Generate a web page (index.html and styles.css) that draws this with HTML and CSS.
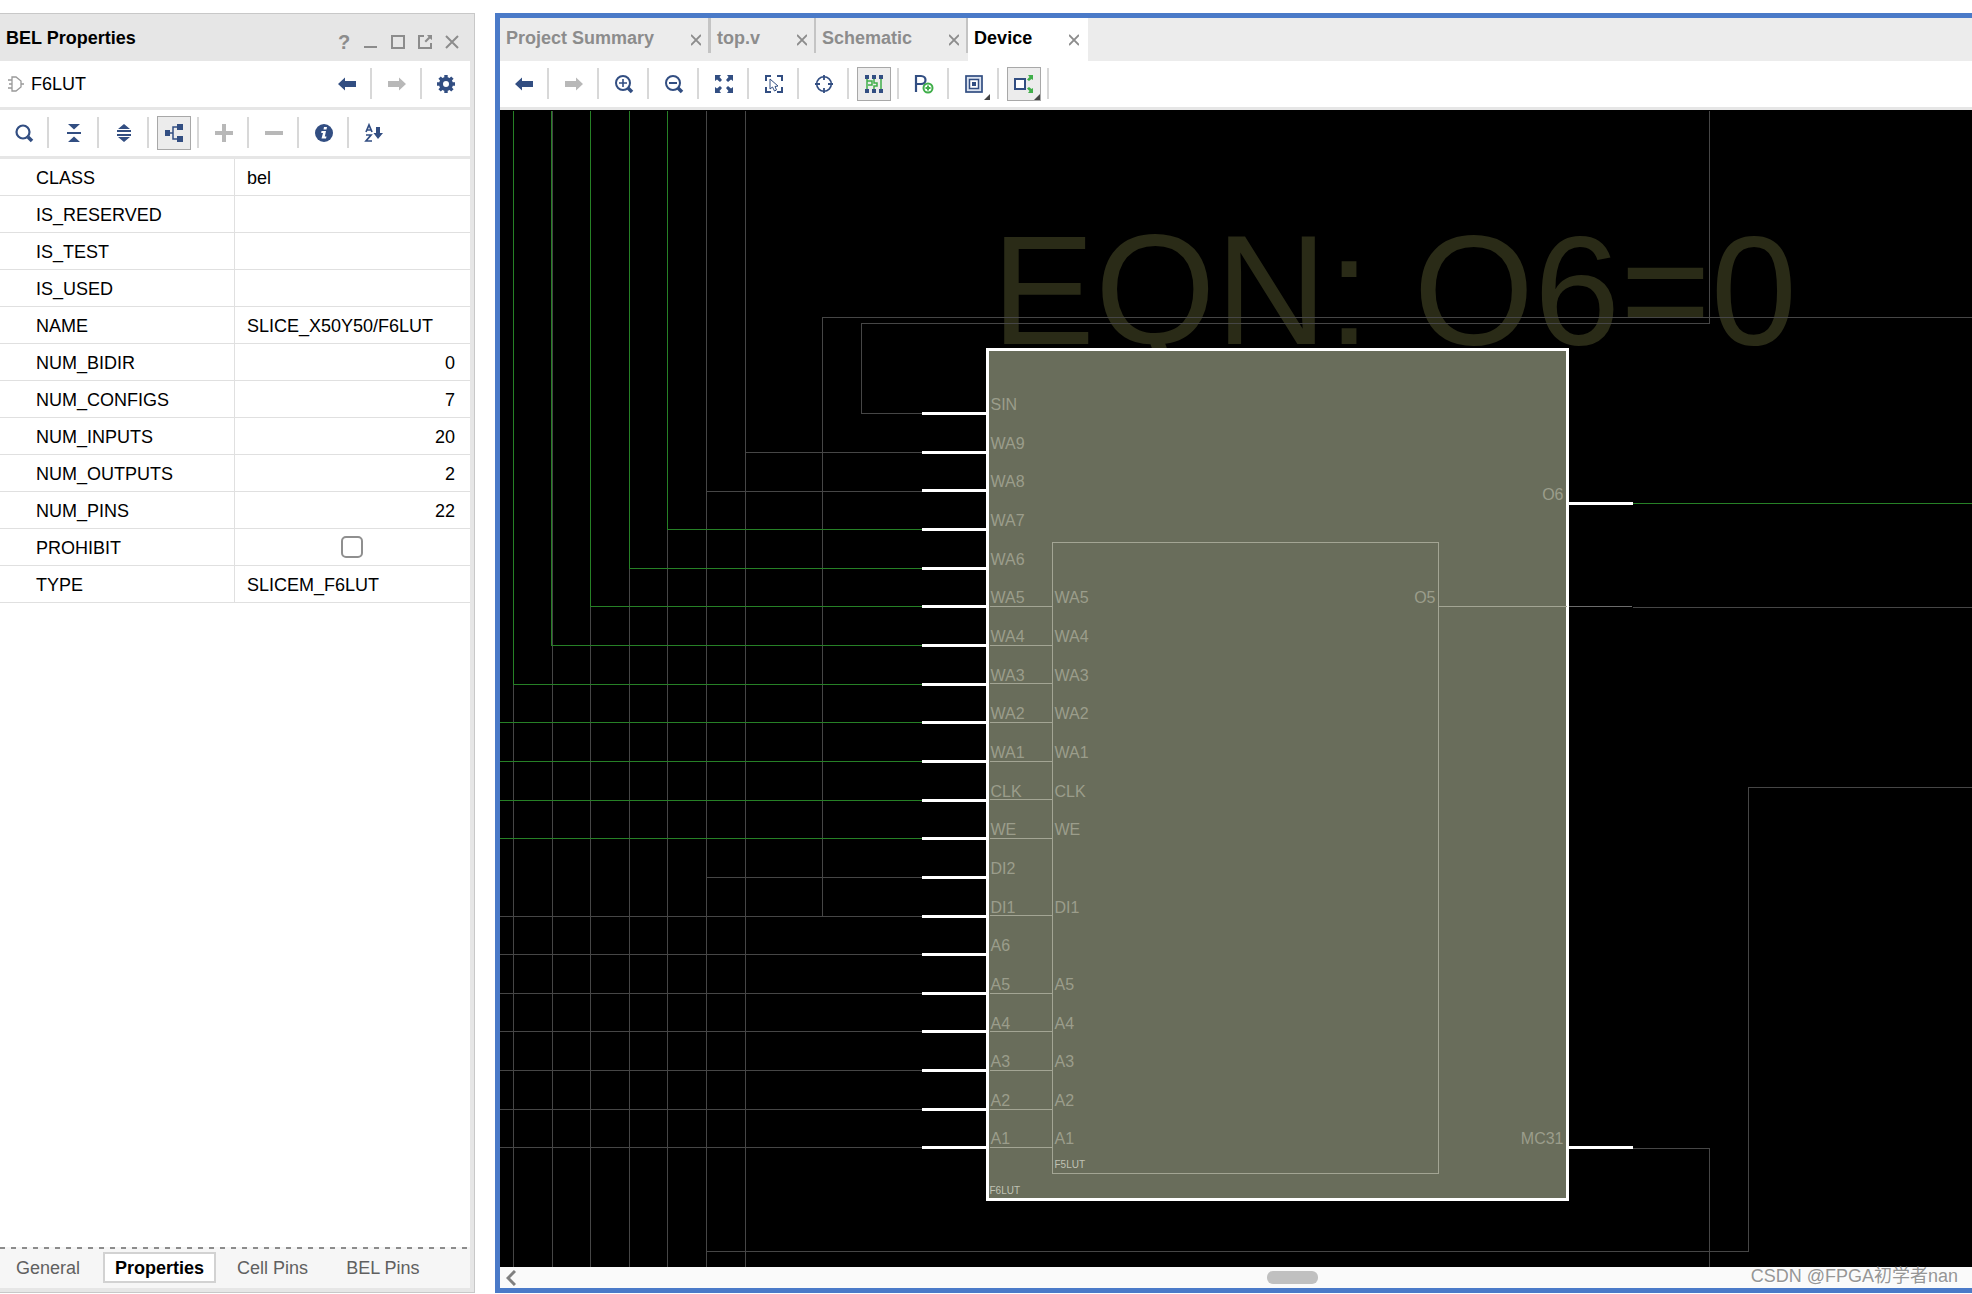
FILE: index.html
```html
<!DOCTYPE html>
<html lang="en">
<head>
<meta charset="utf-8">
<meta name="viewport" content="width=device-width, initial-scale=1">
<title>Device - F6LUT</title>
<link rel="stylesheet" href="styles.css">
</head>
<body>
<main class="workspace">
  <section class="panel" aria-label="BEL Properties">
    <header class="panel-head">
      <h2 class="panel-title">BEL Properties</h2>
      <div class="window-tools">
        <button class="win-btn help" aria-label="Help">?</button>
        <button class="win-btn" aria-label="Minimize"><svg width="14" height="14"><path d="M0 12H13" stroke="#8c8c8c" stroke-width="2"/></svg></button>
        <button class="win-btn" aria-label="Maximize"><svg width="14" height="14"><rect x="1" y="1" width="12" height="12" fill="none" stroke="#8c8c8c" stroke-width="2"/></svg></button>
        <button class="win-btn" aria-label="Float"><svg width="14" height="14"><path d="M6 1H1V13H13V8" fill="none" stroke="#8c8c8c" stroke-width="2"/><path d="M9 0H14V5L12 3.500L8 7.500L6.500 6L10.500 2Z" fill="#8c8c8c"/></svg></button>
        <button class="win-btn" aria-label="Close"><svg width="14" height="14"><path d="M1 1L13 13M13 1L1 13" stroke="#8c8c8c" stroke-width="2"/></svg></button>
      </div>
    </header>
    <div class="object-row">
      <svg class="gate" width="16" height="16"><path d="M4 1H8L13 5V11L8 15H4Z" fill="none" stroke="#999" stroke-width="1.3"/><path d="M0 4H4M1 8H4M0 12H4M13 8H16" stroke="#999" stroke-width="1.3"/></svg>
      <span class="object-name">F6LUT</span>
      <div class="tools">
        <button class="tool" aria-label="Back"><svg width="18" height="18"><path d="M0 9L7 2.500V6H18V12H7V15.500Z" fill="#324e82"/></svg></button>
        <button class="tool" aria-label="Forward"><svg width="18" height="18"><path d="M18 9L11 2.500V6H0V12H11V15.500Z" fill="#b8b8b8"/></svg></button>
        <button class="tool last" aria-label="Settings"><svg width="18" height="18"><circle cx="9" cy="9" r="5" fill="none" stroke="#324e82" stroke-width="4"/><path d="M9 0V4M9 14V18M0 9H4M14 9H18M2.600 2.600L5 5M13 13L15.400 15.400M15.400 2.600L13 5M5 13L2.600 15.400" stroke="#324e82" stroke-width="3.400"/></svg></button>
      </div>
    </div>
    <div class="toolbar">
      <button class="tool" aria-label="Search"><svg width="18" height="18"><circle cx="8" cy="8" r="6.500" fill="none" stroke="#324e82" stroke-width="2.200"/><path d="M13 13L17 17" stroke="#324e82" stroke-width="3.500"/></svg></button>
      <button class="tool" aria-label="Collapse All"><svg width="18" height="18"><path d="M3 0H15L9 5.500ZM3 18H15L9 12.500ZM2 8H16V10H2Z" fill="#324e82"/></svg></button>
      <button class="tool" aria-label="Expand All"><svg width="18" height="18"><path d="M9 0L15 5H3ZM9 18L15 13H3ZM2 6H16V8H2ZM2 10H16V12H2Z" fill="#324e82"/></svg></button>
      <button class="tool on" aria-label="Group by Type"><svg width="18" height="18"><path d="M0 6H5V12H0ZM12 0H18V6H12ZM12 12H18V18H12Z" fill="#324e82"/><path d="M5 9H8M13 3H8V15H13" fill="none" stroke="#324e82" stroke-width="1.500"/></svg></button>
      <button class="tool" aria-label="Add"><svg width="18" height="18"><path d="M0 9H18M9 0V18" stroke="#b8b8b8" stroke-width="4"/></svg></button>
      <button class="tool" aria-label="Remove"><svg width="18" height="18"><path d="M0 9H18" stroke="#b8b8b8" stroke-width="4"/></svg></button>
      <button class="tool" aria-label="Info"><svg width="18" height="18"><circle cx="9" cy="9" r="9" fill="#324e82"/><path d="M9 3H12L11.500 5.500H8.500ZM6.500 7H11L9.800 12.500H11.500L11 14.500H6.500L8 9H6.200Z" fill="#fff"/></svg></button>
      <button class="tool last" aria-label="Sort"><svg width="18" height="18"><path d="M1 8L4 1L7 8M2 6H6M1 11H6L1 17H7" fill="none" stroke="#324e82" stroke-width="1.700"/><path d="M11 3H15V9H18L13 15L8.500 9H11Z" fill="#324e82"/></svg></button>
    </div>
    <div class="props">
      <table class="prop-table">
        <tbody>
          <tr><th scope="row">CLASS</th><td>bel</td></tr>
          <tr><th scope="row">IS_RESERVED</th><td></td></tr>
          <tr><th scope="row">IS_TEST</th><td></td></tr>
          <tr><th scope="row">IS_USED</th><td></td></tr>
          <tr><th scope="row">NAME</th><td>SLICE_X50Y50/F6LUT</td></tr>
          <tr><th scope="row">NUM_BIDIR</th><td class="num">0</td></tr>
          <tr><th scope="row">NUM_CONFIGS</th><td class="num">7</td></tr>
          <tr><th scope="row">NUM_INPUTS</th><td class="num">20</td></tr>
          <tr><th scope="row">NUM_OUTPUTS</th><td class="num">2</td></tr>
          <tr><th scope="row">NUM_PINS</th><td class="num">22</td></tr>
          <tr><th scope="row"><label for="prohibit">PROHIBIT</label></th><td class="check"><input type="checkbox" id="prohibit"></td></tr>
          <tr><th scope="row">TYPE</th><td>SLICEM_F6LUT</td></tr>
        </tbody>
      </table>
    </div>
    <nav class="bottom-tabs">
      <button class="btab">General</button>
      <button class="btab current">Properties</button>
      <button class="btab">Cell Pins</button>
      <button class="btab">BEL Pins</button>
    </nav>
  </section>

  <section class="editor" aria-label="Device">
    <div class="tabs">
      <div class="tab wide-edge"><button class="tab-name">Project Summary</button><button class="tab-close" aria-label="Close Project Summary"><svg width="10" height="12"><path d="M0 1L10 11M10 1L0 11" stroke="#8c8c8c" stroke-width="1.800"/></svg></button></div>
      <div class="tab"><button class="tab-name">top.v</button><button class="tab-close" aria-label="Close top.v"><svg width="10" height="12"><path d="M0 1L10 11M10 1L0 11" stroke="#8c8c8c" stroke-width="1.800"/></svg></button></div>
      <div class="tab"><button class="tab-name">Schematic</button><button class="tab-close" aria-label="Close Schematic"><svg width="10" height="12"><path d="M0 1L10 11M10 1L0 11" stroke="#8c8c8c" stroke-width="1.800"/></svg></button></div>
      <div class="tab active"><button class="tab-name">Device</button><button class="tab-close" aria-label="Close Device"><svg width="10" height="12"><path d="M0 1L10 11M10 1L0 11" stroke="#8c8c8c" stroke-width="1.800"/></svg></button></div>
    </div>
    <div class="toolbar">
      <button class="tool" aria-label="Previous"><svg width="18" height="18"><path d="M0 9L7 2.500V6H18V12H7V15.500Z" fill="#324e82"/></svg></button>
      <button class="tool" aria-label="Next"><svg width="18" height="18"><path d="M18 9L11 2.500V6H0V12H11V15.500Z" fill="#b8b8b8"/></svg></button>
      <button class="tool" aria-label="Zoom In"><svg width="18" height="18"><circle cx="8" cy="8" r="7" fill="none" stroke="#324e82" stroke-width="2"/><path d="M4 8H12M8 4V12" stroke="#324e82" stroke-width="1.600"/><path d="M13 13L17 17" stroke="#324e82" stroke-width="3.500"/></svg></button>
      <button class="tool" aria-label="Zoom Out"><svg width="18" height="18"><circle cx="8" cy="8" r="7" fill="none" stroke="#324e82" stroke-width="2"/><path d="M4 8H12" stroke="#324e82" stroke-width="2"/><path d="M13 13L17 17" stroke="#324e82" stroke-width="3.500"/></svg></button>
      <button class="tool" aria-label="Zoom Fit"><svg width="18" height="18"><path d="M0 0H6L4.500 2L7 5L5 7L2 4.500L0 6ZM18 0V6L16 4.500L13 7L11 5L13.500 2L12 0ZM0 18V12L2 13.500L5 11L7 13L4.500 16L6 18ZM18 18H12L13.500 16L11 13L13 11L16 13.500L18 12Z" fill="#324e82"/></svg></button>
      <button class="tool" aria-label="Select Area"><svg width="18" height="18"><path d="M1 6V1H6M12 1H17V6M17 12V17H12M6 17H1V12" fill="none" stroke="#324e82" stroke-width="2"/><path d="M5 4V14L7.500 12L9.500 16L11.500 15L10 11.500L13 11Z" fill="#fff" stroke="#324e82"/></svg></button>
      <button class="tool" aria-label="Auto-fit Selection"><svg width="18" height="18"><circle cx="9" cy="9" r="7.300" fill="none" stroke="#324e82" stroke-width="1.600"/><path d="M9 0V5M9 13V18M0 9H5M13 9H18" stroke="#324e82" stroke-width="1.800"/></svg></button>
      <button class="tool on" aria-label="Routing Resources"><svg width="18" height="18"><path d="M2 3V15M2 6H7V10H3M9 3V8H12V11H9V15M16 3V15" fill="none" stroke="#3fae49" stroke-width="1.500"/><path d="M0 0H4V4H0ZM7 0H11V4H7ZM14 0H18V4H14ZM0 14H4V18H0ZM7 14H11V18H7ZM14 14H18V18H14Z" fill="#324e82"/></svg></button>
      <button class="tool" aria-label="Draw Pblock"><svg width="18" height="18"><path d="M1 17V1H6C12 1 12 9 6 9H1" fill="none" stroke="#324e82" stroke-width="2.200"/><circle cx="13" cy="13" r="4.500" fill="#fff" stroke="#3fae49" stroke-width="2"/><path d="M10.500 13H15.500M13 10.500V15.500" stroke="#3fae49" stroke-width="2"/></svg></button>
      <button class="tool menu" aria-label="Cell Drawing"><svg width="18" height="18"><rect x="1" y="1" width="16" height="16" fill="#dbe3f0" stroke="#324e82" stroke-width="1.700"/><rect x="4.500" y="4.500" width="9" height="9" fill="#fff" stroke="#324e82" stroke-width="1.500"/><rect x="7" y="7" width="4" height="4" fill="#324e82"/><path class="corner" d="M25 19V25H19Z"/></svg></button>
      <button class="tool menu on" aria-label="Cell Connections"><svg width="18" height="18"><rect x="0" y="4" width="10" height="10" fill="#fff" stroke="#324e82" stroke-width="2"/><path d="M13 0H18V5L16.500 4L14 6L12 4.500L14.500 2ZM13 18H18V13L16.500 14L14 12L12 13.500L14.500 16Z" fill="#3fae49"/><path class="corner" d="M25 19V25H19Z"/></svg></button>
    </div>
    <div class="canvas">
      <svg class="device" width="100%" height="100%" role="img" aria-label="SLICE_X50Y50 F6LUT">
        <g transform="translate(-499.500 -109.500)">
          <text class="eqn" x="991" y="343">EQN: O6=0</text>
          <!-- unused routing -->
          <path class="wire" d="M513 684V2000M552 110V2000M590 606V2000M629 568V2000M667 529V2000M706 110V2000M745 110V2000
            M5000 317H822V916M1709 110V323H861V413H922M745 452H922M706 491H922M706 877H922
            M499 916H922M499 954H922M499 993H922M499 1031H922M499 1070H922M499 1109H922M499 1147H922
            M706 1251H1748V787H5000M1632 1148H1709V2000M1632 607H5000"/>
          <!-- routed nets -->
          <path class="net" d="M667 110V529H922M629 110V568H922M590 110V606H922M551 110V645H922M513 110V684H922
            M499 722H922M499 761H922M499 800H922M499 838H922M1632 503H5000"/>
          <rect class="bel" x="987" y="349" width="580" height="850"/>
          <path class="inner" d="M1052 542H1438V1173H1052ZM989 606H1052M989 645H1052M989 683H1052M989 722H1052M989 761H1052M989 799H1052M989 838H1052M989 915H1052M989 993H1052M989 1031H1052M989 1070H1052M989 1109H1052M989 1147H1052M1438 606H1566"/>
          <path class="stub" d="M1568 606H1631"/>
          <path class="pin" d="M921 413H986M921 452H986M921 490H986M921 529H986M921 568H986M921 606H986M921 645H986M921 684H986M921 722H986M921 761H986M921 800H986M921 838H986M921 877H986M921 916H986M921 954H986M921 993H986M921 1031H986M921 1070H986M921 1109H986M921 1147H986M1568 503H1632M1568 1147H1632"/>
          <g class="pin-name">
            <text x="990" y="409">SIN</text><text x="990" y="448">WA9</text><text x="990" y="486">WA8</text><text x="990" y="525">WA7</text><text x="990" y="564">WA6</text><text x="990" y="602">WA5</text><text x="990" y="641">WA4</text><text x="990" y="680">WA3</text><text x="990" y="718">WA2</text><text x="990" y="757">WA1</text><text x="990" y="796">CLK</text><text x="990" y="834">WE</text><text x="990" y="873">DI2</text><text x="990" y="912">DI1</text><text x="990" y="950">A6</text><text x="990" y="989">A5</text><text x="990" y="1028">A4</text><text x="990" y="1066">A3</text><text x="990" y="1105">A2</text><text x="990" y="1143">A1</text>
            <text x="1054" y="602">WA5</text><text x="1054" y="641">WA4</text><text x="1054" y="680">WA3</text><text x="1054" y="718">WA2</text><text x="1054" y="757">WA1</text><text x="1054" y="796">CLK</text><text x="1054" y="834">WE</text><text x="1054" y="912">DI1</text><text x="1054" y="989">A5</text><text x="1054" y="1028">A4</text><text x="1054" y="1066">A3</text><text x="1054" y="1105">A2</text><text x="1054" y="1143">A1</text>
            <text class="end" x="1563" y="499">O6</text><text class="end" x="1435" y="602">O5</text><text class="end" x="1563" y="1143">MC31</text>
          </g>
          <g class="bel-name"><text x="1054" y="1167">F5LUT</text><text x="989" y="1193">F6LUT</text></g>
        </g>
      </svg>
    </div>
    <div class="hscroll">
      <button class="scroll-left" aria-label="Scroll left"><svg width="10" height="16"><path d="M9 1L2 8L9 15" fill="none" stroke="#808080" stroke-width="3"/></svg></button>
      <div class="track"><div class="thumb"></div></div>
    </div>
    <p class="credit">CSDN @FPGA初学者nan</p>
  </section>
</main>
</body>
</html>
```
FILE: styles.css
```css
* { box-sizing: border-box; }
body {
  margin: 0;
  background: #fff;
  color: #000;
  font: 18px/22px "Liberation Sans", "Noto Sans CJK SC", sans-serif;
}
button {
  display: flex;
  align-items: center;
  justify-content: center;
  margin: 0;
  padding: 0;
  border: 0;
  background: none;
  color: inherit;
  font: inherit;
}
svg { display: block; }

.workspace {
  display: flex;
  gap: 20px;
  height: 100vh;
  min-height: 700px;
  padding: 13px 0 1px;
  overflow: hidden;
}

/* properties panel */
.panel {
  display: flex;
  flex: none;
  flex-direction: column;
  width: 475px;
  border: solid #c8c8c8;
  border-width: 1px 1px 1px 0;
  background: #e6e6e6;
  padding: 0 4px 4px 0;
}
.panel-head {
  display: flex;
  align-items: center;
  justify-content: space-between;
  height: 47px;
  padding: 0 11px 0 6px;
}
.panel-title { margin: 0; font-size: 18px; line-height: 22px; }
.window-tools { display: flex; gap: 13px; padding-top: 8px; }
.win-btn { width: 14px; height: 14px; }
.help { color: #8c8c8c; font-size: 20px; font-weight: bold; }

.object-row {
  display: flex;
  align-items: center;
  height: 46px;
  padding-left: 8px;
  background: #fff;
}
.object-name { flex: 1; padding-left: 7px; }
.tools { display: flex; }

.toolbar {
  display: flex;
  align-items: center;
  height: 46px;
  margin-top: 3px;
  background: #fff;
}
.tool {
  position: relative;
  flex: none;
  width: 50px;
  height: 34px;
}
.toolbar .tool:first-child { width: 49px; padding-right: 1px; }
.tool::after {
  content: "";
  position: absolute;
  top: 1px;
  right: 0;
  width: 2px;
  height: 31px;
  background: #d8d8d8;
}
.tool.last { width: 48px; }
.toolbar .tool.last { width: 50px; }
.tool.last::after { display: none; }
.on::before {
  content: "";
  position: absolute;
  inset: 0 8px;
  border: 1px solid #a8a8a8;
  background: #ececec;
}
.tool svg { position: relative; overflow: visible; }
.corner { fill: #444; }

.props { flex: 1; margin-top: 3px; background: #fff; overflow: hidden; }
.prop-table { width: 100%; border-collapse: separate; border-spacing: 0; table-layout: fixed; }
.prop-table th,
.prop-table td {
  height: 37px;
  padding: 2px 15px 0 12px;
  border-bottom: 1px solid #e0e0e0;
  font-weight: normal;
  text-align: left;
}
.prop-table th {
  width: 235px;
  padding-left: 36px;
  border-right: 1px solid #e0e0e0;
}
.prop-table .num { text-align: right; }
.prop-table .check { padding: 0 2px 0 0; }
.check input {
  appearance: none;
  display: block;
  width: 22px;
  height: 22px;
  margin: 0 auto;
  border: 2px solid #8f8f8f;
  border-radius: 5px;
  background: #fff;
}

.bottom-tabs {
  display: flex;
  align-items: center;
  height: 41px;
  background:
    repeating-linear-gradient(90deg, #8c8c8c 0 5px, transparent 5px 11px) top / 100% 2px no-repeat,
    #f6f6f6;
}
.btab { padding: 0 19px; color: #606060; height: 31px; }
.btab:first-child { padding-left: 16px; }
.current {
  margin-left: 4px;
  padding: 0 10px;
  border: 2px solid #d2d2d2;
  background: #fff;
  color: #000;
  font-weight: bold;
}
.current + .btab { padding-left: 21px; }

/* device editor */
.editor {
  position: relative;
  display: flex;
  flex: 1;
  flex-direction: column;
  min-width: 0;
  border: solid #4a7ac8;
  border-width: 5px 0 5px 5px;
}
.tabs {
  display: flex;
  align-items: flex-start;
  height: 43px;
  background: #ececec;
}
.tab {
  display: flex;
  align-items: center;
  gap: 37px;
  height: 35px;
  padding: 5px 7px 0 6px;
  border-right: 2px solid #c4c4c4;
  color: #8c8c8c;
  font-weight: bold;
}
.wide-edge { border-right-width: 3px; }
.tab-close { padding-top: 4px; }
.active {
  height: 43px;
  padding-right: 9px;
  padding-bottom: 8px;
  border-right: 0;
  background: #fff;
  color: #000;
}
.editor .toolbar { margin: 0; }
.canvas {
  flex: 1;
  min-height: 0;
  border-top: 3px solid #e6e6e6;
  background: #000;
  overflow: hidden;
}

.eqn { fill: #2a2b17; font-size: 155px; }
.device path,
.device rect { shape-rendering: crispEdges; }
.wire, .net, .inner, .stub, .pin { fill: none; stroke-width: 1; }
.wire { stroke: #464646; }
.net { stroke: #268026; }
.inner { stroke: #a3a594; }
.stub { stroke: #6c6c6c; }
.bel { fill: #696d5b; stroke: #fff; stroke-width: 3; }
.pin { stroke: #fff; stroke-width: 3; }
.pin-name { fill: #9b9d8b; font-size: 16px; }
.bel-name { fill: #c0c2b4; font-size: 10px; }
.end { text-anchor: end; }

.hscroll {
  display: flex;
  align-items: center;
  height: 21px;
  background: #fafafa;
}
.scroll-left { width: 21px; height: 21px; }
.track { flex: 1; }
.thumb {
  width: 51px;
  height: 13px;
  margin-left: calc(50% + 20px);
  border-radius: 6px;
  background: #c0c0c0;
}

/* credit line drawn over the canvas corner */
.credit {
  position: absolute;
  right: 14px;
  bottom: 0;
  margin: 0;
  color: #969696;
  font-size: 18px;
  line-height: 24px;
  text-shadow: 1px 1px 1px #fff;
}
```
